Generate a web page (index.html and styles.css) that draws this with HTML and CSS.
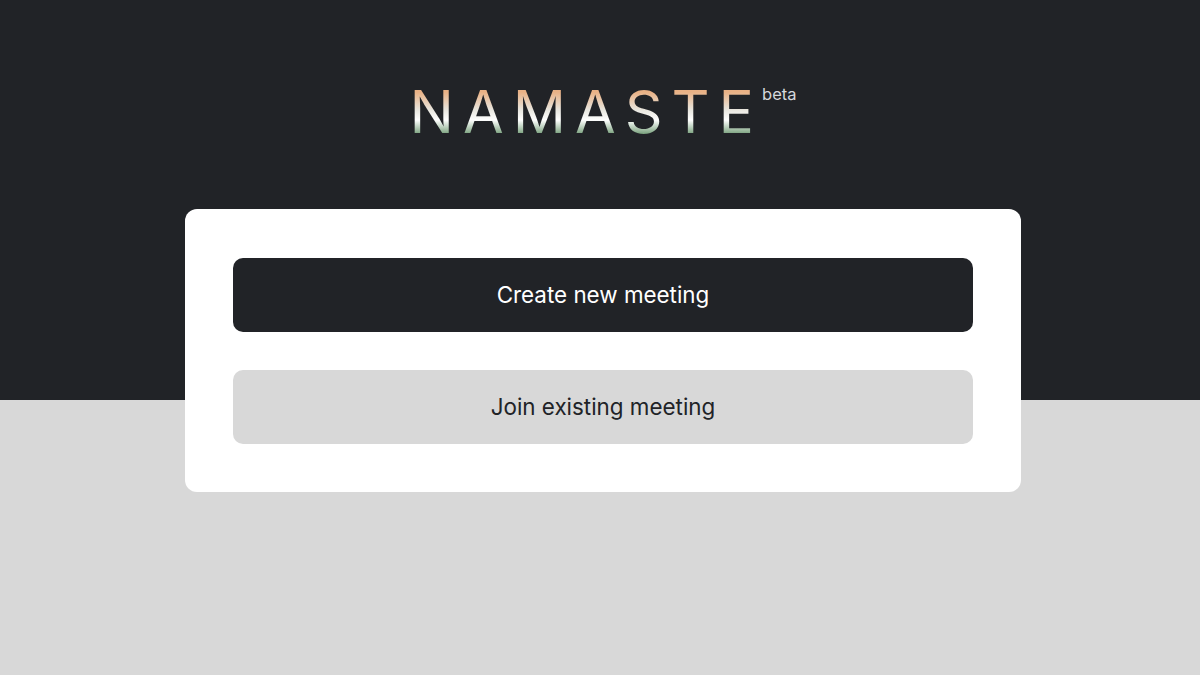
FILE: index.html
```html
<!DOCTYPE html>
<html lang="en">
<head>
    <meta charset="UTF-8">
    <meta name="viewport" content="width=device-width, initial-scale=1.0">
    <title>Namaste</title>
    <link rel="stylesheet" href="styles.css">
</head>
<body>
    <header class="brand">
        <h1 class="logo">NAMASTE</h1>
        <span class="beta">beta</span>
    </header>

    <div class="main">
        <div class="card">
            <button class="btn btn-dark">Create new meeting</button>
            <button class="btn btn-light">Join existing meeting</button>
        </div>
    </div>
</body>
</html>
```

FILE: styles.css
```css
body {
    margin: 0;
    padding-left: 6px;
    height: 675px;
    overflow: hidden;
    font-family: Inter, Arial, sans-serif;
    background: linear-gradient(to bottom, #212327 400px, #d8d8d8 400px);
}

.brand {
    height: 209px;
    display: flex;
    justify-content: center;
    align-items: flex-start;
}

.logo {
    margin: 78px 0 0;
    font-size: 59px;
    line-height: 68px;
    font-weight: 400;
    letter-spacing: 9px;
    background: linear-gradient(to bottom, #e9b185 14px, #e8e6df 32px, #ffffff 42px, #6f9a73 57px);
    -webkit-background-clip: text;
    background-clip: text;
    color: transparent;
}

.beta {
    margin: 85px 0 0 -1px;
    font-size: 16.5px;
    line-height: 19px;
    color: #d5d8dc;
}

.main {
    display: flex;
    justify-content: center;
}

.card {
    width: 836px;
    box-sizing: border-box;
    padding: 49px 48px 48px;
    display: flex;
    flex-direction: column;
    gap: 38px;
    background-color: #fff;
    border-radius: 12px;
}

.btn {
    height: 74px;
    padding: 0 0 2px;
    border: none;
    border-radius: 10px;
    font-family: Inter, Arial, sans-serif;
    font-size: 22.4px;
    cursor: pointer;
}

.btn-dark {
    background-color: #212327;
    color: #fff;
}

.btn-light {
    background-color: #d8d8d8;
    color: #212327;
}
```
